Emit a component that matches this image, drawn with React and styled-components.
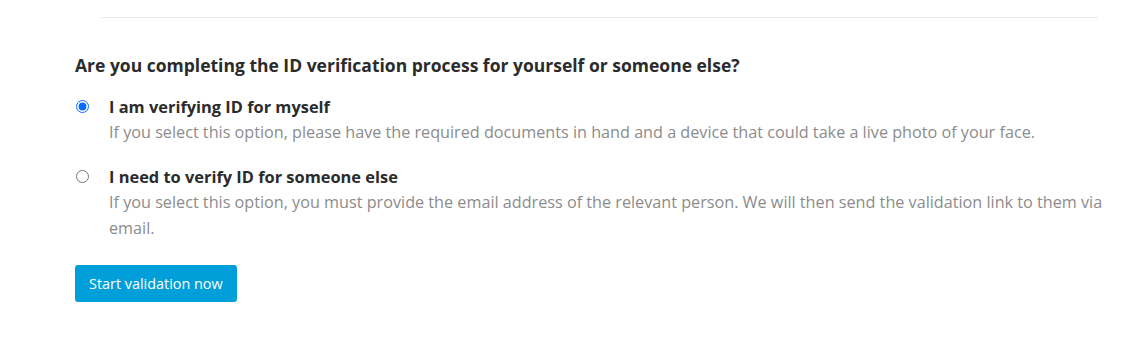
import { useState } from "react";
import styled, { createGlobalStyle } from "styled-components";

const GlobalStyle = createGlobalStyle`
  body {
    margin: 0;
    background: #fff;
    font-family: "Open Sans", "Lato", sans-serif;
  }
`;

const options = [
  {
    id: "self",
    title: "I am verifying ID for myself",
    text: "If you select this option, please have the required documents in hand and a device that could take a live photo of your face.",
  },
  {
    id: "other",
    title: "I need to verify ID for someone else",
    text: "If you select this option, you must provide the email address of the relevant person. We will then send the validation link to them via email.",
  },
];

function App() {
  const [choice, setChoice] = useState("self");

  return (
    <Page>
      <GlobalStyle />
      <Divider />
      <Form>
        <Question>
          Are you completing the ID verification process for yourself or someone else?
        </Question>
        <OptionList>
          {options.map((opt) => (
            <Option key={opt.id}>
              <Radio
                type="radio"
                name="verify"
                checked={choice === opt.id}
                onChange={() => setChoice(opt.id)}
              />
              <OptionBody>
                <OptionTitle>{opt.title}</OptionTitle>
                <OptionText>{opt.text}</OptionText>
              </OptionBody>
            </Option>
          ))}
        </OptionList>
        <StartButton type="button">Start validation now</StartButton>
      </Form>
    </Page>
  );
}

const Page = styled.div`
  width: 1135px;
  height: 341px;
  padding-top: 17px;
  box-sizing: border-box;
`;

const Divider = styled.hr`
  margin: 0 37px 0 100px;
  border: 0;
  border-top: 1px solid #ebebeb;
`;

const Form = styled.div`
  padding: 35px 24px 0 75px;
  display: flex;
  flex-direction: column;
  align-items: flex-start;
`;

const Question = styled.h2`
  margin: 0;
  font-size: 17.5px;
  font-weight: 700;
  color: #2b2b2b;
  line-height: 24px;
`;

const OptionList = styled.div`
  display: flex;
  flex-direction: column;
  gap: 21px;
  margin-top: 19px;
`;

const Option = styled.label`
  display: flex;
  align-items: flex-start;
  gap: 20px;
  cursor: pointer;
`;

const Radio = styled.input`
  margin: 4px 0 0 1px;
  width: 13px;
  height: 13px;
  flex-shrink: 0;
  accent-color: #0a6cff;
`;

const OptionBody = styled.div`
  display: flex;
  flex-direction: column;
  gap: 1px;
`;

const OptionTitle = styled.span`
  font-size: 16.4px;
  font-weight: 700;
  color: #2b2b2b;
  line-height: 22px;
`;

const OptionText = styled.span`
  font-size: 16.2px;
  color: #8c8c8c;
  line-height: 26px;
`;

const StartButton = styled.button`
  margin-top: 24px;
  height: 37px;
  padding: 0 14px;
  border: 0;
  border-radius: 3px;
  background: #009fd9;
  color: #fff;
  font-family: inherit;
  font-size: 14.4px;
  cursor: pointer;
`;

export default App;
